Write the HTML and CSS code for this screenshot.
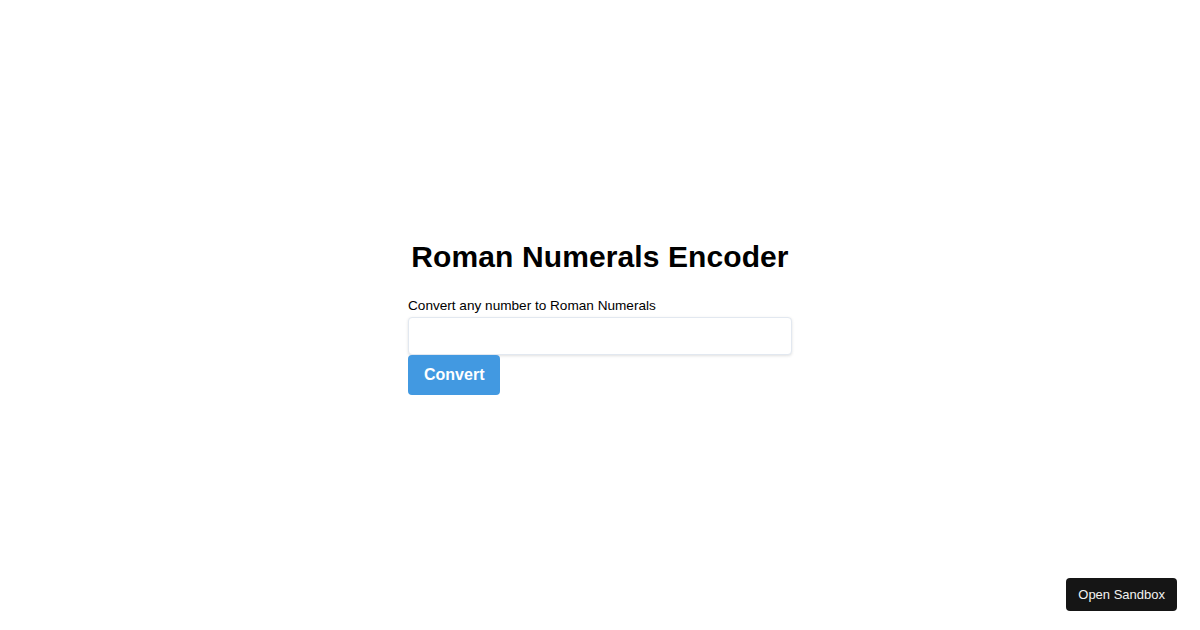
FILE: index.html
```html
<!DOCTYPE html>
<html lang="en">
<head>
    <meta charset="UTF-8">
    <meta name="viewport" content="width=device-width, initial-scale=1.0">
    <title>Roman Numerals Encoder</title>
    <link rel="stylesheet" href="styles.css">
</head>
<body>
    <div class="page">
        <div class="container">
            <h1>Roman Numerals Encoder</h1>

            <form class="encoder" onsubmit="return false;">
                <label for="number">Convert any number to Roman Numerals</label>
                <input type="text" id="number">
                <button type="submit" class="convert">Convert</button>
            </form>
        </div>
    </div>

    <button class="sandbox">Open Sandbox</button>
</body>
</html>
```

FILE: styles.css
```css
body {
    font-family: "Liberation Sans", Arial, sans-serif;
    background-color: #fff;
    color: #000;
    margin: 0;
}

.page {
    min-height: 100vh;
    display: flex;
    align-items: center;
    justify-content: center;
}

.container {
    width: 384px;
    padding-top: 3px;
}

h1 {
    text-align: center;
    font-size: 30px;
    line-height: 36px;
    font-weight: bold;
    letter-spacing: 0.1px;
    margin: 0 0 20px;
}

.encoder {
    display: flex;
    flex-direction: column;
    align-items: flex-start;
}

label {
    font-size: 13.6px;
    line-height: 22px;
}

input[type="text"] {
    width: 100%;
    height: 38px;
    padding: 8px 12px;
    border: 1px solid #e2e8f0;
    border-radius: 4px;
    box-sizing: border-box;
    box-shadow: 0 1px 3px rgba(0, 0, 0, 0.12);
    font-size: 16px;
}

.convert {
    background-color: #4299e1;
    color: #fff;
    font-family: inherit;
    font-weight: bold;
    font-size: 16px;
    border: none;
    border-radius: 4px;
    height: 40px;
    padding: 0 16px;
    cursor: pointer;
}

.sandbox {
    position: fixed;
    right: 23px;
    bottom: 19px;
    height: 33px;
    padding: 0 12px;
    background-color: #151515;
    color: #f2f2f2;
    border: none;
    border-radius: 4px;
    font-family: inherit;
    font-size: 13px;
    cursor: pointer;
}
```
